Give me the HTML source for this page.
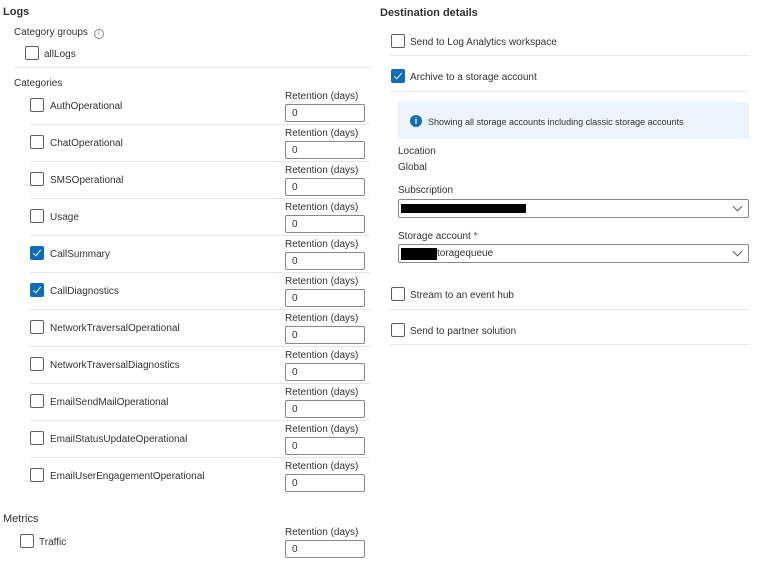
<!DOCTYPE html><html><head><style>
body{margin:0;width:759px;height:562px;background:#fff;font-family:"Liberation Sans",sans-serif;font-size:10px;color:#323130;position:relative;overflow:hidden}
.a{position:absolute;white-space:nowrap;line-height:12px;margin-top:1px}
.cb{position:absolute;width:12px;height:12px;border:1px solid #605e5c;border-radius:2px;background:#fff}
.cb.on{background:#0f6cbd;border-color:#0f6cbd}
.cb.on:after{content:"";position:absolute;left:4px;top:1px;width:3px;height:7px;border:solid #fff;border-width:0 1.5px 1.5px 0;transform:rotate(40deg)}
.in{position:absolute;width:80px;height:18px;border:1px solid #8a8886;border-radius:2px;line-height:18px;padding-left:6px;box-sizing:border-box;font-size:10px}
.hr{position:absolute;height:1px;background:#e8e6e4}
.sel{position:absolute;left:398px;width:349px;height:17px;border:1px solid #8a8886;border-radius:2px}
.chev{position:absolute;right:7px;top:3px;width:6px;height:6px;border:solid #605e5c;border-width:0 1px 1px 0;transform:rotate(45deg)}
</style></head><body>
<div class="a" style="left:3px;top:5px;font-weight:bold;font-size:11px">Logs</div>
<div class="a" style="left:14px;top:26px">Category groups <span style="display:inline-block;width:8px;height:8px;border:1px solid #8a8886;border-radius:50%;font-size:7px;line-height:8px;text-align:center;color:#8a8886;margin-left:3px">i</span></div>
<div class="cb" style="left:25px;top:46px"></div>
<div class="a" style="left:44px;top:48px">allLogs</div>
<div class="hr" style="left:14px;top:67px;width:358px"></div>
<div class="a" style="left:14px;top:77px">Categories</div>
<div id="rows"></div>
<div class="a" style="left:3px;top:512px;font-size:11px">Metrics</div>
<div class="cb" style="left:20px;top:534px"></div>
<div class="a" style="left:39px;top:536px">Traffic</div>
<div class="a" style="left:285px;top:526px">Retention (days)</div>
<div class="in" style="left:285px;top:540px">0</div>

<div class="a" style="left:380px;top:6px;font-weight:bold;font-size:11px">Destination details</div>
<div class="cb" style="left:391px;top:34px"></div>
<div class="a" style="left:410px;top:36px">Send to Log Analytics workspace</div>
<div class="hr" style="left:390px;top:55px;width:359px"></div>
<div class="cb on" style="left:391px;top:69px"></div>
<div class="a" style="left:410px;top:71px">Archive to a storage account</div>
<div class="hr" style="left:390px;top:91px;width:359px"></div>
<div style="position:absolute;left:398px;top:102px;width:351px;height:37px;background:#eef4fb"></div>
<div style="position:absolute;left:410px;top:115px;width:12px;height:12px;border-radius:50%;background:#0f6cbd;color:#fff;font-size:9px;font-weight:bold;text-align:center;line-height:12px">i</div>
<div class="a" style="left:428px;top:115px;font-size:9px">Showing all storage accounts including classic storage accounts</div>
<div class="a" style="left:398px;top:145px">Location</div>
<div class="a" style="left:398px;top:161px">Global</div>
<div class="a" style="left:398px;top:184px">Subscription</div>
<div class="sel" style="top:199px"><div style="position:absolute;left:2px;top:4px;width:125px;height:9px;background:#000"></div><div class="chev"></div></div>
<div class="a" style="left:398px;top:230px">Storage account <span style="color:#a4262c">*</span></div>
<div class="sel" style="top:244px"><div style="position:absolute;left:2px;top:3px;width:36px;height:12px;background:#000"></div><div class="a" style="left:38px;top:2px">toragequeue</div><div class="chev"></div></div>
<div class="cb" style="left:391px;top:287px"></div>
<div class="a" style="left:410px;top:289px">Stream to an event hub</div>
<div class="hr" style="left:390px;top:309px;width:359px"></div>
<div class="cb" style="left:391px;top:323px"></div>
<div class="a" style="left:410px;top:325px">Send to partner solution</div>
<div class="hr" style="left:390px;top:344px;width:359px"></div>
<script>
var n=["AuthOperational","ChatOperational","SMSOperational","Usage","CallSummary","CallDiagnostics","NetworkTraversalOperational","NetworkTraversalDiagnostics","EmailSendMailOperational","EmailStatusUpdateOperational","EmailUserEngagementOperational"],h="";
n.forEach(function(t,i){var y=37*i;var on=(i==4||i==5)?" on":"";
h+='<div class="cb'+on+'" style="left:30px;top:'+(98+y)+'px"></div><div class="a" style="left:50px;top:'+(100+y)+'px">'+t+'</div><div class="a" style="left:285px;top:'+(90+y)+'px">Retention (days)</div><div class="in" style="left:285px;top:'+(104+y)+'px">0</div>';
if(i<10)h+='<div class="hr" style="left:30px;top:'+(124+y)+'px;width:340px"></div>';});
document.getElementById("rows").innerHTML=h;
</script>
</body></html>
